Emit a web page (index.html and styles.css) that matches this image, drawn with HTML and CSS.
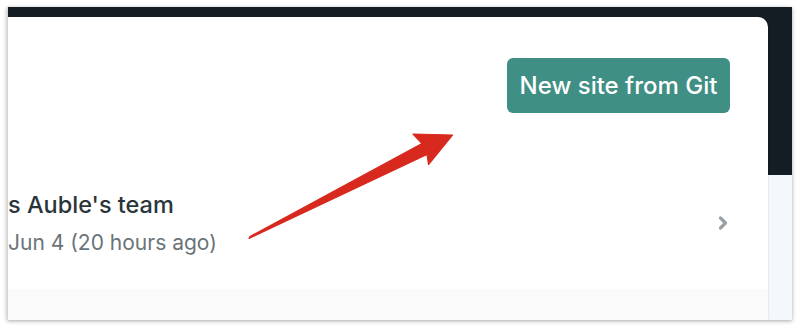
FILE: index.html
```html
<!DOCTYPE html>
<html>
<head>
<meta charset="utf-8">
<link rel="stylesheet" href="styles.css">
</head>
<body>
<div class="frame">
  <div class="card">
    <div class="header">
      <button class="btn">New site from Git</button>
    </div>
    <div class="row">
      <div class="info">
        <div class="team">s Auble's team</div>
        <div class="date">Jun 4 (20 hours ago)</div>
      </div>
      <svg class="chev" width="12" height="16" viewBox="0 0 12 16"><path d="M3.5 3 L8.5 8 L3.5 13" fill="none" stroke="#9a9fa3" stroke-width="3.2" stroke-linecap="round" stroke-linejoin="round"/></svg>
    </div>
    <div class="footer"></div>
  </div>
  <svg class="arrow" width="800" height="328" viewBox="0 0 800 328">
    <polygon points="249,238.5 427,154.5 428.5,164.5 452.5,135 413,134 422,143.5 250,236.5" fill="#d8291f" stroke="#d8291f" stroke-width="1.2" stroke-linejoin="round"/>
  </svg>
</div>
</body>
</html>
```
FILE: styles.css
```css
html, body {
  margin: 0;
  padding: 0;
  background: #ffffff;
  width: 800px;
  height: 328px;
  overflow: hidden;
}
body {
  font-family: Inter, "Liberation Sans", sans-serif;
}
.frame {
  margin: 7px 0 0 7px;
  width: 785px;
  height: 313px;
  box-sizing: border-box;
  border-left: 1px solid #d6d6d6;
  background: linear-gradient(#131d23 0, #131d23 168px, #f5f8fb 168px);
  box-shadow: 0 1px 4px rgba(0, 0, 0, 0.35);
  padding: 10px 24px 0 0;
  display: flex;
}
.card {
  flex: 1;
  background: #ffffff;
  border-top-right-radius: 10px;
  display: flex;
  flex-direction: column;
  box-shadow: 1px 0 1px rgba(0, 0, 0, 0.06);
}
.header {
  display: flex;
  justify-content: flex-end;
  padding: 41px 38px 0 0;
}
.btn {
  background: #3f8f85;
  color: #ffffff;
  border: none;
  border-radius: 6px;
  height: 55px;
  width: 223px;
  font-family: Inter, "Liberation Sans", sans-serif;
  font-size: 24px;
  font-weight: 500;
  padding: 0;
  letter-spacing: 0;
}
.row {
  display: flex;
  align-items: center;
  justify-content: space-between;
  padding: 77px 39px 33px 0;
}
.team {
  font-size: 23.5px;
  line-height: 29px;
  color: #2a353b;
  font-weight: 500;
}
.date {
  margin-top: 10px;
  font-size: 21px;
  line-height: 27px;
  color: #6b7378;
}
.footer {
  flex: 1;
  background: #fafafa;
}
.arrow {
  position: absolute;
  left: 0;
  top: 0;
  pointer-events: none;
}
```
